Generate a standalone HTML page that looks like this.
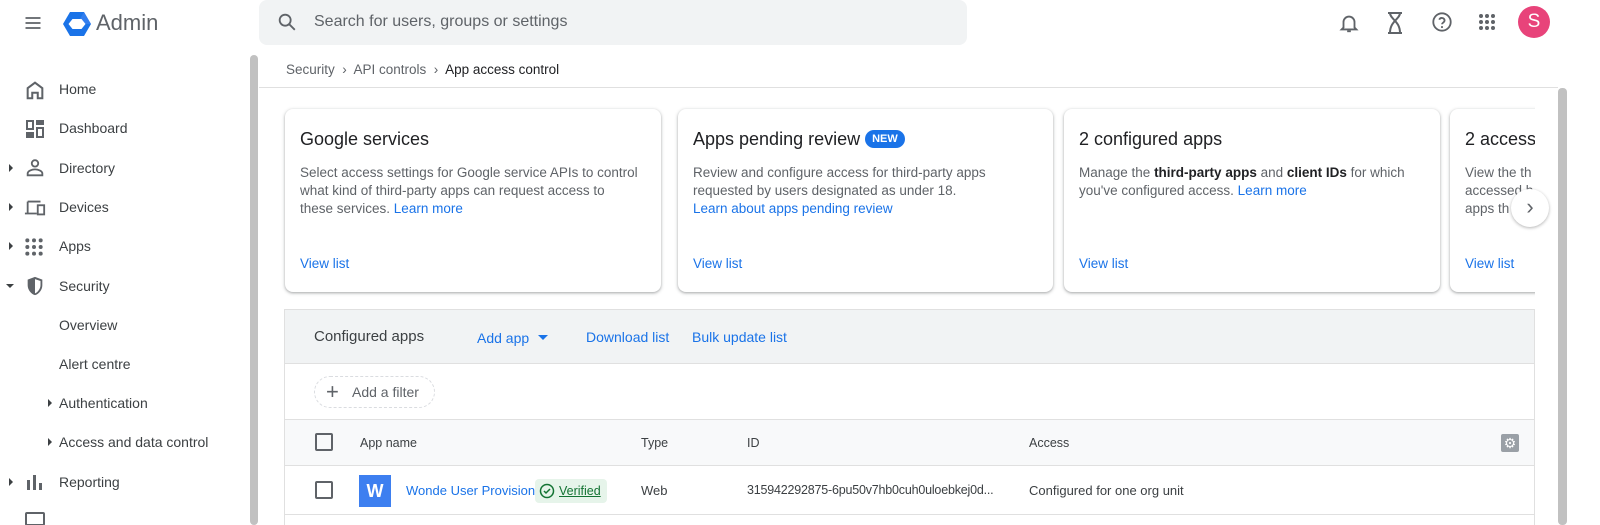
<!DOCTYPE html>
<html><head><meta charset="utf-8"><style>
*{box-sizing:border-box;margin:0;padding:0}
html,body{width:1600px;height:525px;overflow:hidden}
body{background:#fff;font-family:"Liberation Sans",Arial,sans-serif;color:#202124;position:relative}
.a{position:absolute}
.nav{position:absolute;left:59px;font-size:14px;color:#3c4043}
.ic{position:absolute;left:24px}
.tri{position:absolute;width:0;height:0;border-top:4px solid transparent;border-bottom:4px solid transparent;border-left:4px solid #3c4043}
.card{position:absolute;top:109px;height:183px;background:#fff;border-radius:8px;box-shadow:0 1px 2px rgba(60,64,67,.3),0 1px 3px 1px rgba(60,64,67,.15);overflow:hidden}
.card h3{position:absolute;left:15px;top:20px;font-size:18px;font-weight:normal;color:#202124;white-space:nowrap}
.card p{position:absolute;left:15px;top:55px;font-size:13.5px;line-height:18px;color:#5f6368;width:340px}
.card .vl{position:absolute;left:15px;top:147px;font-size:13.5px;color:#1a73e8}
.lk{color:#1a73e8}
.cb{position:absolute;width:18px;height:18px;border:2px solid #5f6368;border-radius:2px}
</style></head><body>
<svg class="a" style="left:23px;top:13px" width="20" height="20" viewBox="0 0 24 24"><path d="M3 6h18M3 12h18M3 18h18" stroke="#5f6368" stroke-width="2"/></svg>
<svg class="a" style="left:62px;top:11px" width="30" height="26" viewBox="0 0 30 26"><path d="M8 1h14l7 12-7 12H8L1 13z" fill="#1a73e8"/><path d="M15 13l7-12 7 12z" fill="#4285f4" opacity=".6"/><path d="M10.5 8h9l4 5-4 5h-9l-4-5z" fill="#fff"/></svg>
<div class="a" style="left:96px;top:10px;font-size:22px;color:#5f6368">Admin</div>
<div class="a" style="left:259px;top:0;width:708px;height:45px;background:#f1f3f4;border-radius:8px"></div>
<svg class="a" style="left:276px;top:11px" width="22" height="22" viewBox="0 0 24 24"><circle cx="10" cy="10" r="6" fill="none" stroke="#5f6368" stroke-width="2"/><path d="M14.5 14.5l6 6" stroke="#5f6368" stroke-width="2"/></svg>
<div class="a" style="left:314px;top:13px;font-size:16px;color:#5f6368">Search for users, groups or settings</div>
<svg class="a" style="left:1338px;top:11px" width="22" height="24" viewBox="0 0 24 24"><path d="M6 17V11a6 6 0 0112 0v6l2 2H4z" fill="none" stroke="#5f6368" stroke-width="2"/><path d="M10 21h4" stroke="#5f6368" stroke-width="2"/></svg>
<svg class="a" style="left:1385px;top:11px" width="20" height="24" viewBox="0 0 20 24"><path d="M3 2h14M3 22h14M5 2c0 6 10 8 10 20M15 2c0 6-10 8-10 20" fill="none" stroke="#5f6368" stroke-width="2"/></svg>
<svg class="a" style="left:1431px;top:11px" width="22" height="22" viewBox="0 0 24 24"><circle cx="12" cy="12" r="9.5" fill="none" stroke="#5f6368" stroke-width="2"/><path d="M9 9.5a3 3 0 015.8 1c0 2-2.8 2.2-2.8 4" fill="none" stroke="#5f6368" stroke-width="2"/><circle cx="12" cy="17.5" r="1.2" fill="#5f6368"/></svg>
<svg class="a" style="left:1478px;top:13px" width="18" height="18" viewBox="0 0 18 18" fill="#5f6368"><circle cx="3" cy="3" r="2"/><circle cx="9" cy="3" r="2"/><circle cx="15" cy="3" r="2"/><circle cx="3" cy="9" r="2"/><circle cx="9" cy="9" r="2"/><circle cx="15" cy="9" r="2"/><circle cx="3" cy="15" r="2"/><circle cx="9" cy="15" r="2"/><circle cx="15" cy="15" r="2"/></svg>
<div class="a" style="left:1518px;top:6px;width:32px;height:32px;border-radius:50%;background:#e8437a;color:#fff;font-size:19px;text-align:center;line-height:32px">S</div>
<svg class="ic" style="top:79px" width="22" height="22" viewBox="0 0 24 24"><path d="M4 21V10l8-6 8 6v11h-5v-6H9v6z" fill="none" stroke="#5f6368" stroke-width="2.2"/></svg>
<div class="nav" style="top:81px">Home</div>
<svg class="ic" style="top:118px" width="22" height="22" viewBox="0 0 22 22" fill="#5f6368"><rect x="2" y="2" width="8" height="10"/><rect x="12" y="2" width="8" height="5"/><rect x="2" y="14" width="8" height="6"/><rect x="12" y="9" width="8" height="11"/><rect x="4" y="4" width="4" height="6" fill="#fff"/><rect x="14" y="11" width="4" height="7" fill="#fff"/></svg>
<div class="nav" style="top:120px">Dashboard</div>
<div class="tri" style="left:9px;top:164px"></div>
<svg class="ic" style="top:157px" width="22" height="22" viewBox="0 0 24 24"><circle cx="12" cy="7" r="3.5" fill="none" stroke="#5f6368" stroke-width="2"/><path d="M4 20v-2c0-3 5-4.5 8-4.5s8 1.5 8 4.5v2z" fill="none" stroke="#5f6368" stroke-width="2"/></svg>
<div class="nav" style="top:160px">Directory</div>
<div class="tri" style="left:9px;top:203px"></div>
<svg class="ic" style="top:197px" width="22" height="22" viewBox="0 0 24 24"><path d="M4 5h14M4 5v12M1 18h13" fill="none" stroke="#5f6368" stroke-width="2"/><rect x="15" y="9" width="7" height="10" fill="none" stroke="#5f6368" stroke-width="2"/></svg>
<div class="nav" style="top:199px">Devices</div>
<div class="tri" style="left:9px;top:242px"></div>
<svg class="ic" style="top:237px" width="20" height="20" viewBox="0 0 18 18" fill="#5f6368"><circle cx="3" cy="3" r="1.8"/><circle cx="9" cy="3" r="1.8"/><circle cx="15" cy="3" r="1.8"/><circle cx="3" cy="9" r="1.8"/><circle cx="9" cy="9" r="1.8"/><circle cx="15" cy="9" r="1.8"/><circle cx="3" cy="15" r="1.8"/><circle cx="9" cy="15" r="1.8"/><circle cx="15" cy="15" r="1.8"/></svg>
<div class="nav" style="top:238px">Apps</div>
<div class="a" style="left:6px;top:284px;border-left:4px solid transparent;border-right:4px solid transparent;border-top:4px solid #3c4043"></div>
<svg class="ic" style="top:275px" width="22" height="22" viewBox="0 0 24 24"><path d="M12 2l8 3v6c0 5-3.5 9.5-8 11-4.5-1.5-8-6-8-11V5z" fill="#5f6368"/><path d="M12 4.5v15.5c3-1.3 6-5 6-9V6.5z" fill="#fff"/></svg>
<div class="nav" style="top:278px">Security</div>
<div class="nav" style="top:317px">Overview</div>
<div class="nav" style="top:356px">Alert centre</div>
<div class="tri" style="left:48px;top:399px"></div>
<div class="nav" style="top:395px">Authentication</div>
<div class="tri" style="left:48px;top:438px"></div>
<div class="nav" style="top:434px">Access and data control</div>
<div class="tri" style="left:9px;top:478px"></div>
<svg class="ic" style="top:472px" width="22" height="20" viewBox="0 0 22 20" fill="#5f6368"><rect x="3" y="8" width="3" height="10"/><rect x="9" y="3" width="3" height="15"/><rect x="15" y="11" width="3" height="7"/></svg>
<div class="nav" style="top:474px">Reporting</div>
<div class="a" style="left:25px;top:512px;width:20px;height:14px;border:2px solid #5f6368;border-radius:2px"></div>
<div class="a" style="left:250px;top:55px;width:8px;height:470px;background:#c1c1c1;border-radius:4px"></div>
<div class="a" style="left:286px;top:62px;font-size:13.5px;color:#5f6368">Security &nbsp;›&nbsp; API controls &nbsp;›&nbsp; <span style="color:#202124">App access control</span></div>
<div class="a" style="left:259px;top:87px;width:1299px;height:1px;background:#e0e0e0"></div>
<div class="card" style="left:285px;width:376px"><h3>Google services</h3><p>Select access settings for Google service APIs to control what kind of third-party apps can request access to these services. <span class="lk">Learn more</span></p><div class="vl">View list</div></div>
<div class="card" style="left:678px;width:375px"><h3>Apps pending review <span style="display:inline-block;background:#1a73e8;color:#fff;font-size:11px;font-weight:bold;border-radius:10px;padding:3px 7px;vertical-align:3px">NEW</span></h3><p>Review and configure access for third-party apps requested by users designated as under 18.<br><span class="lk">Learn about apps pending review</span></p><div class="vl">View list</div></div>
<div class="card" style="left:1064px;width:376px"><h3>2 configured apps</h3><p>Manage the <b style="color:#202124;font-weight:600">third-party apps</b> and <b style="color:#202124;font-weight:600">client IDs</b> for which you've configured access. <span class="lk">Learn more</span></p><div class="vl">View list</div></div>
<div class="a" style="left:1445px;top:100px;width:90px;height:200px;overflow:hidden"><div class="card" style="left:5px;top:9px;width:120px"><h3>2 access</h3><p>View the th<br>accessed b<br>apps th</p><div class="vl">View list</div></div></div>
<div class="a" style="left:1558px;top:88px;width:9px;height:437px;background:#c1c1c1;border-radius:4px"></div>
<div class="a" style="left:1511px;top:189px;width:38px;height:38px;border-radius:50%;background:#fff;box-shadow:0 1px 3px rgba(0,0,0,.3);color:#5f6368;font-size:22px;text-align:center;line-height:36px">›</div>
<div class="a" style="left:284px;top:309px;width:1251px;height:216px;border:1px solid #e0e0e0;border-bottom:none"></div>
<div class="a" style="left:285px;top:310px;width:1249px;height:54px;background:#f1f3f4;border-bottom:1px solid #e0e0e0"></div>
<div class="a" style="left:314px;top:328px;font-size:15px;color:#3c4043">Configured apps</div>
<div class="a" style="left:477px;top:330px;font-size:14px;color:#1a73e8">Add app</div>
<div class="a" style="left:538px;top:335px;border-left:5px solid transparent;border-right:5px solid transparent;border-top:5px solid #1a73e8"></div>
<div class="a" style="left:586px;top:329px;font-size:14px;color:#1a73e8">Download list</div>
<div class="a" style="left:692px;top:329px;font-size:14px;color:#1a73e8">Bulk update list</div>
<div class="a" style="left:314px;top:376px;width:121px;height:32px;border:1px dashed #dadce0;border-radius:16px"></div>
<div class="a" style="left:326px;top:379px;font-size:22px;color:#5f6368;font-weight:300">+</div>
<div class="a" style="left:352px;top:384px;font-size:14px;color:#5f6368">Add a filter</div>
<div class="a" style="left:285px;top:419px;width:1249px;height:47px;background:#f8f9fa;border-top:1px solid #e0e0e0;border-bottom:1px solid #e0e0e0"></div>
<div class="cb" style="left:315px;top:433px"></div>
<div class="a" style="left:360px;top:436px;font-size:12.5px;color:#3c4043">App name</div>
<div class="a" style="left:641px;top:436px;font-size:12.5px;color:#3c4043">Type</div>
<div class="a" style="left:747px;top:436px;font-size:12.5px;color:#3c4043">ID</div>
<div class="a" style="left:1029px;top:436px;font-size:12.5px;color:#3c4043">Access</div>
<div class="a" style="left:1501px;top:434px;width:18px;height:18px;background:#9aa0a6;border-radius:2px;color:#fff;font-size:14px;text-align:center;line-height:18px">⚙</div>
<div class="cb" style="left:315px;top:481px"></div>
<div class="a" style="left:359px;top:475px;width:32px;height:32px;background:#3d7ff0;color:#fff;font-weight:bold;font-size:18px;text-align:center;line-height:32px">W</div>
<div class="a" style="left:406px;top:483px;font-size:13px;color:#1a73e8">Wonde User Provision</div>
<div class="a" style="left:535px;top:479px;width:72px;height:24px;background:#e6f4ea;border-radius:4px"></div>
<svg class="a" style="left:539px;top:483px" width="16" height="16" viewBox="0 0 16 16"><circle cx="8" cy="8" r="6.5" fill="none" stroke="#137333" stroke-width="1.5"/><path d="M5 8l2 2 4-4" fill="none" stroke="#137333" stroke-width="1.5"/></svg>
<div class="a" style="left:559px;top:484px;font-size:12.5px;color:#137333;text-decoration:underline">Verified</div>
<div class="a" style="left:641px;top:483px;font-size:13px;color:#3c4043">Web</div>
<div class="a" style="left:747px;top:483px;font-size:12.5px;color:#3c4043;letter-spacing:-.2px">315942292875-6pu50v7hb0cuh0uloebkej0d...</div>
<div class="a" style="left:1029px;top:483px;font-size:13px;color:#3c4043">Configured for one org unit</div>
<div class="a" style="left:285px;top:514px;width:1249px;height:1px;background:#e0e0e0"></div>
</body></html>
